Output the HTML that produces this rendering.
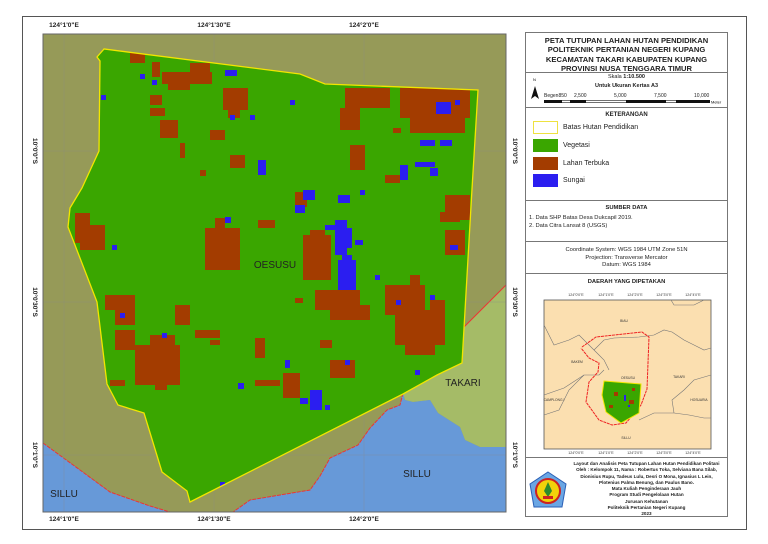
<!DOCTYPE html>
<html><head><meta charset="utf-8"><style>
*{margin:0;padding:0;box-sizing:border-box}
body{width:768px;height:544px;background:#fff;position:relative;overflow:hidden;font-family:"Liberation Sans",sans-serif;color:#222}
.abs{position:absolute}
.pan{position:absolute;left:525px;width:203px;border-left:1px solid #777;border-right:1px solid #777;border-bottom:1px solid #777}
.c{text-align:center}
.b{font-weight:bold}
</style></head><body>
<div class="abs" style="left:22px;top:16px;width:725px;height:514px;border:1px solid #555"></div>

<svg class="abs" style="left:0;top:0" width="520" height="544" viewBox="0 0 520 544">
<rect x="43" y="34" width="463" height="478" fill="#969a58"/>
<polygon points="506,285 463,328 462,363 437,375 403,393 405,400 413,402 430,400 438,413 460,427 465,440 480,447 506,447" fill="#a5bb67"/>
<polygon points="403,393 400,405 387,410 370,428 358,445 330,458 320,476 310,490 250,500 233,512 506,512 506,447 480,447 465,440 460,427 438,413 430,400 413,402 405,400" fill="#6799d8"/>
<polyline points="403,393 400,405 387,410 370,428 358,445 330,458 320,476 310,490 250,500 233,512" fill="none" stroke="#e33" stroke-width="1" stroke-dasharray="4,1"/>
<polyline points="506,285 463,328 462,363" fill="none" stroke="#e33" stroke-width="1"/>
<polygon points="43,443 80,470 110,492 150,506 170,512 43,512" fill="#6799d8"/>
<polyline points="43,443 80,470 110,492 150,506 170,512" fill="none" stroke="#e33" stroke-width="1" stroke-dasharray="4,1"/>
<g stroke="#888" stroke-width="0.5" opacity="0.6"><line x1="64" y1="34" x2="64" y2="512"/><line x1="214" y1="34" x2="214" y2="512"/><line x1="364" y1="34" x2="364" y2="512"/><line x1="43" y1="151" x2="506" y2="151"/><line x1="43" y1="302" x2="506" y2="302"/><line x1="43" y1="455" x2="506" y2="455"/></g>
<clipPath id="cp"><polygon id="pg" points="104,49 97,57 100,61 99,151 82,188 70,208 68,227 97,302 107,384 118,405 144,413 162,472 187,491 190,502 403,394 437,375 462,363 472,189 478,90 325,84 300,74"/></clipPath>
<g clip-path="url(#cp)">
<rect x="60" y="40" width="430" height="470" fill="#3aa600"/>
<g fill="#a33c00">
<rect x="130" y="53" width="15" height="10"/><rect x="152" y="62" width="8" height="15"/><rect x="162" y="72" width="50" height="12"/><rect x="190" y="63" width="20" height="20"/><rect x="168" y="84" width="22" height="6"/>
<rect x="150" y="95" width="12" height="10"/><rect x="150" y="108" width="15" height="8"/><rect x="160" y="120" width="18" height="18"/><rect x="180" y="143" width="5" height="15"/><rect x="210" y="130" width="15" height="10"/><rect x="223" y="88" width="25" height="22"/><rect x="228" y="110" width="12" height="8"/><rect x="230" y="155" width="15" height="13"/><rect x="200" y="170" width="6" height="6"/>
<rect x="75" y="213" width="15" height="30"/><rect x="80" y="225" width="25" height="25"/>
<rect x="205" y="228" width="35" height="42"/><rect x="215" y="218" width="10" height="12"/><rect x="258" y="220" width="17" height="8"/>
<rect x="303" y="235" width="28" height="45"/><rect x="310" y="230" width="15" height="8"/><rect x="295" y="192" width="12" height="15"/>
<rect x="345" y="88" width="45" height="20"/><rect x="340" y="108" width="20" height="22"/><rect x="350" y="145" width="15" height="25"/><rect x="400" y="88" width="70" height="30"/><rect x="410" y="115" width="55" height="18"/><rect x="385" y="175" width="15" height="8"/><rect x="393" y="128" width="8" height="5"/>
<rect x="445" y="195" width="25" height="25"/><rect x="440" y="212" width="20" height="10"/><rect x="445" y="230" width="20" height="25"/>
<rect x="315" y="290" width="45" height="20"/><rect x="330" y="305" width="40" height="15"/><rect x="385" y="285" width="40" height="30"/><rect x="395" y="310" width="50" height="35"/><rect x="405" y="340" width="30" height="15"/><rect x="430" y="300" width="15" height="15"/><rect x="410" y="275" width="10" height="12"/>
<rect x="105" y="295" width="30" height="15"/><rect x="115" y="305" width="20" height="20"/><rect x="115" y="330" width="20" height="20"/><rect x="135" y="345" width="45" height="40"/><rect x="150" y="335" width="25" height="15"/><rect x="155" y="380" width="12" height="10"/><rect x="110" y="380" width="15" height="6"/>
<rect x="175" y="305" width="15" height="20"/><rect x="195" y="330" width="25" height="8"/><rect x="210" y="340" width="10" height="5"/>
<rect x="255" y="338" width="10" height="20"/><rect x="255" y="380" width="25" height="6"/><rect x="283" y="373" width="17" height="25"/><rect x="320" y="340" width="12" height="8"/><rect x="330" y="360" width="25" height="18"/><rect x="295" y="298" width="8" height="5"/>
</g>
<g fill="#2b1ef0">
<rect x="140" y="74" width="5" height="5"/><rect x="101" y="95" width="5" height="5"/><rect x="152" y="80" width="5" height="5"/><rect x="225" y="70" width="12" height="6"/><rect x="230" y="115" width="5" height="5"/><rect x="250" y="115" width="5" height="5"/><rect x="258" y="160" width="8" height="15"/><rect x="290" y="100" width="5" height="5"/>
<rect x="436" y="102" width="15" height="12"/><rect x="420" y="140" width="15" height="6"/><rect x="440" y="140" width="12" height="6"/><rect x="400" y="165" width="8" height="15"/><rect x="415" y="162" width="20" height="5"/><rect x="430" y="168" width="8" height="8"/><rect x="455" y="100" width="5" height="5"/>
<rect x="303" y="190" width="12" height="10"/><rect x="295" y="205" width="10" height="8"/><rect x="325" y="225" width="20" height="5"/><rect x="335" y="220" width="12" height="35"/><rect x="340" y="228" width="12" height="20"/><rect x="338" y="260" width="18" height="30"/><rect x="342" y="255" width="10" height="8"/><rect x="338" y="195" width="12" height="8"/><rect x="360" y="190" width="5" height="5"/><rect x="355" y="240" width="8" height="5"/><rect x="396" y="300" width="5" height="5"/>
<rect x="225" y="217" width="6" height="6"/><rect x="112" y="245" width="5" height="5"/><rect x="120" y="313" width="5" height="5"/><rect x="162" y="333" width="5" height="5"/><rect x="238" y="383" width="6" height="6"/>
<rect x="285" y="360" width="5" height="8"/><rect x="310" y="390" width="12" height="20"/><rect x="300" y="398" width="8" height="6"/><rect x="325" y="405" width="5" height="5"/><rect x="220" y="482" width="5" height="5"/><rect x="345" y="360" width="5" height="5"/><rect x="415" y="370" width="5" height="5"/><rect x="430" y="295" width="5" height="5"/><rect x="375" y="275" width="5" height="5"/><rect x="450" y="245" width="8" height="5"/>
</g>
</g>
<use href="#pg" fill="none" stroke="#f2e600" stroke-width="1.3"/>
<rect x="43" y="34" width="463" height="478" fill="none" stroke="#666" stroke-width="1"/>
<g font-size="6.5" fill="#222" text-anchor="middle" font-weight="bold">
<text x="64" y="27">124°1'0"E</text><text x="214" y="27">124°1'30"E</text><text x="364" y="27">124°2'0"E</text>
<text x="64" y="521">124°1'0"E</text><text x="214" y="521">124°1'30"E</text><text x="364" y="521">124°2'0"E</text>
<text transform="translate(33,151) rotate(90)">10°0'0"S</text><text transform="translate(33,302) rotate(90)">10°0'30"S</text><text transform="translate(33,455) rotate(90)">10°1'0"S</text>
<text transform="translate(513,151) rotate(90)">10°0'0"S</text><text transform="translate(513,302) rotate(90)">10°0'30"S</text><text transform="translate(513,455) rotate(90)">10°1'0"S</text>
</g>
<g font-size="10" fill="#222" text-anchor="middle">
<text x="275" y="268">OESUSU</text><text x="463" y="386">TAKARI</text><text x="417" y="477">SILLU</text><text x="64" y="497">SILLU</text>
</g>
</svg>

<div class="pan c b" style="top:32px;height:41px;border-top:1px solid #777;font-size:7.6px;line-height:9.3px;padding-top:3px">PETA TUTUPAN LAHAN HUTAN PENDIDIKAN<br>POLITEKNIK PERTANIAN NEGERI KUPANG<br>KECAMATAN TAKARI KABUPATEN KUPANG<br>PROVINSI NUSA TENGGARA TIMUR</div>
<div class="pan" style="top:73px;height:35px;font-size:5.5px">
<div class="abs c" style="left:0;width:100%;top:1px">Skala <b>1:10.500</b></div>
<div class="abs c b" style="left:0;width:100%;top:10px">Untuk Ukuran Kertas A3</div>
<svg class="abs" style="left:4px;top:2px" width="200" height="32"><text x="3" y="6" font-size="4">N</text><polygon points="5,11 1,24 5,21 9,24" fill="#111"/>
<g font-size="5" fill="#222"><text x="14" y="22">Begen850</text><text x="44" y="22">2,500</text><text x="84" y="22">5,000</text><text x="124" y="22">7,500</text><text x="164" y="22">10,000</text></g>
<rect x="14" y="25" width="166" height="3" fill="#111"/><rect x="32" y="25.6" width="8" height="1.8" fill="#fff"/><rect x="56" y="25.6" width="40" height="1.8" fill="#fff"/><rect x="136" y="25.6" width="10" height="1.8" fill="#fff"/><text x="181" y="28.5" font-size="4">Meter</text></svg>
</div>
<div class="pan" style="top:108px;height:93px;font-size:7px">
<div class="abs c b" style="left:0;width:100%;top:4px;font-size:6px">KETERANGAN</div>
<div class="abs" style="left:7px;top:13px;width:25px;height:13px;border:1.5px solid #eee240;background:#fff"></div><div class="abs" style="left:37px;top:16px">Batas Hutan Pendidikan</div>
<div class="abs" style="left:7px;top:31px;width:25px;height:13px;background:#3aa600"></div><div class="abs" style="left:37px;top:34px">Vegetasi</div>
<div class="abs" style="left:7px;top:49px;width:25px;height:13px;background:#a33c00"></div><div class="abs" style="left:37px;top:52px">Lahan Terbuka</div>
<div class="abs" style="left:7px;top:66px;width:25px;height:13px;background:#2b1ef0"></div><div class="abs" style="left:37px;top:69px">Sungai</div>
</div>
<div class="pan" style="top:201px;height:41px;font-size:5.8px;line-height:8px">
<div class="c b" style="margin-top:3px">SUMBER DATA</div>
<div style="padding-left:3px;margin-top:2px">1. Data SHP Batas Desa Dukcapil 2019.<br>2. Data Citra Lansat 8 (USGS)</div>
</div>
<div class="pan c" style="top:242px;height:32px;font-size:5.8px;line-height:7.5px;padding-top:5px">Coordinate System: WGS 1984 UTM Zone 51N<br>Projection: Transverse Mercator<br>Datum: WGS 1984</div>
<div class="pan" style="top:274px;height:184px">
<div class="abs c b" style="left:0;width:100%;top:5px;font-size:5.8px">DAERAH YANG DIPETAKAN</div>
</div>
<svg class="abs" style="left:530px;top:288px" width="196" height="170">
<g font-size="3.5" fill="#333" text-anchor="middle"><text x="46" y="8">124°0'0"E</text><text x="76" y="8">124°1'0"E</text><text x="105" y="8">124°2'0"E</text><text x="134" y="8">124°3'0"E</text><text x="163" y="8">124°4'0"E</text>
<text x="46" y="166">124°0'0"E</text><text x="76" y="166">124°1'0"E</text><text x="105" y="166">124°2'0"E</text><text x="134" y="166">124°3'0"E</text><text x="163" y="166">124°4'0"E</text></g>
<g transform="translate(14,12)">
<rect x="0" y="0" width="167" height="149" fill="#fbdfb0" stroke="#555" stroke-width="0.8"/>
<g fill="none" stroke="#777" stroke-width="0.6"><path d="M0,25 10,45 25,40 35,35 50,50 55,55 60,60 65,70"/><path d="M0,95 20,88 40,75 55,75 60,70"/><path d="M0,115 15,110 25,90 40,75"/><path d="M50,50 60,40 70,38 95,37 110,35 120,30 128,32 140,40 150,45 160,50 167,48"/><path d="M95,120 110,113 130,113 145,115 160,118 167,118"/><path d="M130,113 128,100 140,90 150,80 167,75"/><path d="M127,0 130,5 150,5 160,0"/></g>
<polyline points="38,47 52,37 98,32 105,37 103,89 97,105 82,123 68,125 55,120 42,102 45,82 54,72 55,63 45,58 37,48" fill="none" stroke="#e22" stroke-width="1" stroke-dasharray="3,0.7"/>
<polygon points="60,81 97,84 95,113 77,123 62,112 58,95" fill="#3aa600" stroke="#f2e600" stroke-width="1"/>
<g fill="#a33c00"><rect x="70" y="92" width="4" height="4"/><rect x="85" y="100" width="5" height="4"/><rect x="65" y="105" width="4" height="3"/><rect x="88" y="88" width="3" height="3"/></g>
<g fill="#2b1ef0"><rect x="80" y="95" width="2" height="6"/><rect x="84" y="105" width="2" height="2"/></g>
<g font-size="3.3" fill="#333" text-anchor="middle"><text x="80" y="22">BIAU</text><text x="33" y="63">BAKEM</text><text x="84" y="79">OESUSU</text><text x="135" y="78">TAKARI</text><text x="10" y="101">CAMPLONG I</text><text x="155" y="101">HOSUARIA</text><text x="82" y="139">SILLU</text></g>
</g>
</svg>
<div class="pan" style="top:458px;height:59px">
<svg class="abs" style="left:2px;top:13px" width="40" height="40"><polygon points="20,1 38,13 34,36 6,36 2,13" fill="#6aa6e4" stroke="#2b5fb5" stroke-width="1"/><circle cx="20" cy="20" r="12" fill="#f2d20a" stroke="#c22" stroke-width="2"/><polygon points="20,11 24,20 20,26 16,20" fill="#2d8a2d"/><rect x="15" y="25" width="10" height="3" fill="#c22"/></svg>
<div class="abs c b" style="left:38px;width:165px;top:3px;font-size:4.6px;line-height:6.3px">Layout dan Analisis Peta Tutupan Lahan Hutan Pendidikan Politani<br>Oleh : Kelompok 11, Nama : Robertus Toka, Selviana Bana Silab,<br>Dionisius Rupu, Tadeus Lulu, Desri O Mona, Ignasius L Lein,<br>Plotenius Palma Benung, dan Paulus Bano.<br>Mata Kuliah Penginderaan Jauh<br>Program Studi Pengelolaan Hutan<br>Jurusan Kehutanan<br>Politeknik Pertanian Negeri Kupang<br>2023</div>
</div>
</body></html>
